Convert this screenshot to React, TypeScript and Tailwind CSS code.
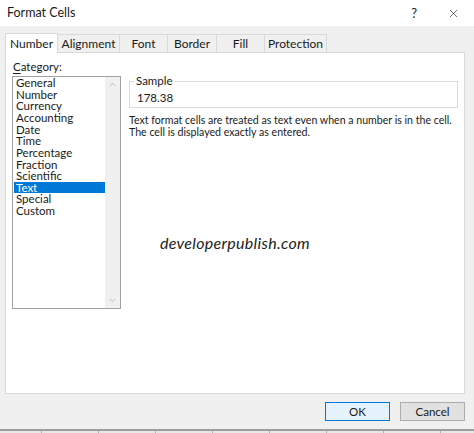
import { ChevronUp, ChevronDown, X } from "lucide-react"

const categories = [
  "General",
  "Number",
  "Currency",
  "Accounting",
  "Date",
  "Time",
  "Percentage",
  "Fraction",
  "Scientific",
  "Text",
  "Special",
  "Custom",
]

const tabs = [
  { label: "Number", w: "w-[53px]" },
  { label: "Alignment", w: "w-[62px]" },
  { label: "Font", w: "w-[48px]" },
  { label: "Border", w: "w-[49px]" },
  { label: "Fill", w: "w-[48px]" },
  { label: "Protection", w: "w-[62px]" },
]

export default function App() {
  return (
    <div className="w-[474px] h-[433px] overflow-hidden bg-[#f0f0f0] text-[#1a1a1a] font-['Lato',sans-serif] text-[11.5px] leading-none">
      {/* title bar */}
      <div className="h-[26px] bg-white flex items-center pl-[7px] pr-[14px]">
        <span className="text-[12.5px] flex-1">Format Cells</span>
        <span className="text-[13px] mr-[30px]">?</span>
        <X className="w-[13px] h-[13px]" strokeWidth={1.2} />
      </div>

      <div className="pl-[5px] pr-[9px] pt-[6px]">
        {/* tabs */}
        <div className="flex items-end h-[20px]">
          {tabs.map((t, i) =>
            i === 0 ? (
              <div
                key={t.label}
                className={`${t.w} h-[20px] bg-white border border-b-0 border-[#d9d9d9] flex items-center justify-center relative z-10 -mb-px text-[12px]`}
              >
                {t.label}
              </div>
            ) : (
              <div
                key={t.label}
                className={`${t.w} h-[18px] border border-l-0 border-b-0 border-[#d9d9d9] flex items-center justify-center text-[12px]`}
              >
                {t.label}
              </div>
            ),
          )}
        </div>

        {/* panel */}
        <div className="h-[342px] bg-white border border-[#d9d9d9] flex pl-[6px] pr-[6px] pt-[8px]">
          <div className="w-[109px] shrink-0 flex flex-col">
            <div className="pl-[1px] h-[15px]">
              <span className="underline underline-offset-2">C</span>ategory:
            </div>
            <div className="h-[233px] border border-[#a0a0a0] flex">
              <div className="flex-1 pl-[1px]">
                {categories.map((c) =>
                  c === "Text" ? (
                    <div key={c} className="h-[11.65px] bg-[#0078d7] text-white pl-[2px] flex items-center">
                      {c}
                    </div>
                  ) : (
                    <div key={c} className="h-[11.65px] pl-[2px] flex items-center">
                      {c}
                    </div>
                  ),
                )}
              </div>
              <div className="w-[15px] bg-[#f0f0f0] flex flex-col justify-between items-center py-[3px]">
                <ChevronUp className="w-[9px] h-[9px] text-[#a6a6a6]" strokeWidth={2} />
                <ChevronDown className="w-[9px] h-[9px] text-[#a6a6a6]" strokeWidth={2} />
              </div>
            </div>
          </div>

          <div className="flex-1 min-w-0 ml-[8px] pt-[20px] flex flex-col">
            <div className="h-[27px] border border-[#dcdcdc] relative pl-[7px] flex items-center pt-[6px]">
              <span className="absolute -top-[7px] left-[4px] bg-white px-[2px]">Sample</span>
              <span>178.38</span>
            </div>
            <div className="mt-[6px] leading-[12px] text-[10.6px] whitespace-nowrap">
              <div>Text format cells are treated as text even when a number is in the cell.</div>
              <div>The cell is displayed exactly as entered.</div>
            </div>
            <div className="mt-[97px] ml-[31px] text-[16px] italic tracking-[0.3px] text-[#222] font-['Lato',sans-serif]">
              developerpublish.com
            </div>
          </div>
        </div>

        {/* buttons */}
        <div className="h-[35px] flex items-center justify-end gap-[10px] pr-0">
          <button className="w-[65px] h-[19px] bg-[#e5f1fb] border border-[#0078d7] text-[11.5px]">OK</button>
          <button className="w-[65px] h-[19px] bg-[#e1e1e1] border border-[#adadad] text-[11.5px]">Cancel</button>
        </div>
      </div>

      {/* sheet behind */}
      <div className="h-[2px] bg-[#9e9e9e]" />
      <div className="flex h-[5px] bg-[#e8e8e8]">
        {Array.from({ length: 9 }).map((_, i) => (
          <div key={i} className={`${i === 0 ? "w-[42px]" : "w-[57px]"} h-full border-r border-[#b0b0b0] shrink-0`} />
        ))}
      </div>
    </div>
  )
}
